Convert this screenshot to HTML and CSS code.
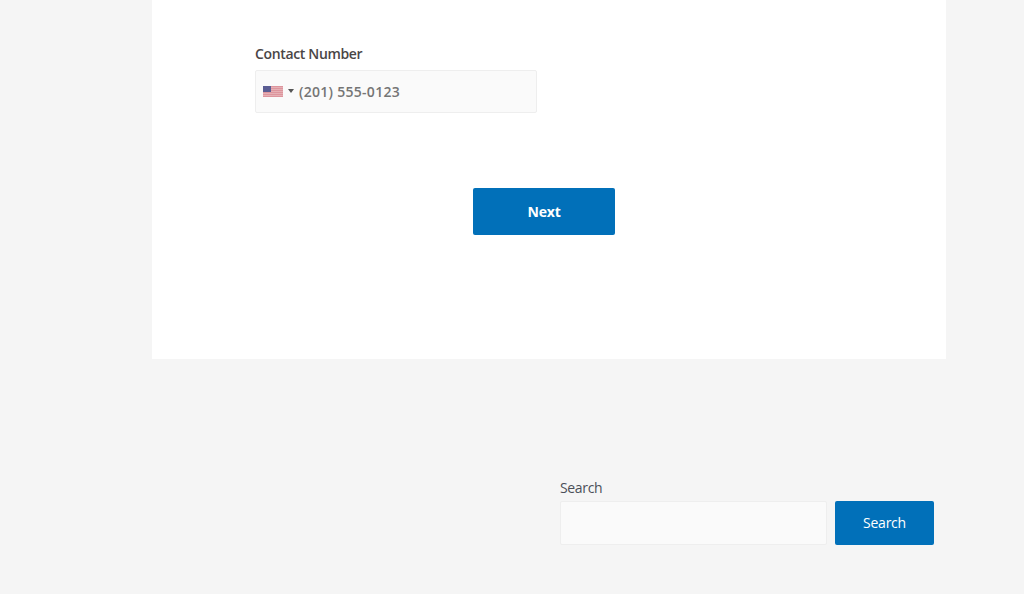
FILE: index.html
```html
<!DOCTYPE html>
<html lang="en">
<head>
    <meta charset="UTF-8">
    <meta name="viewport" content="width=device-width, initial-scale=1.0">
    <title>Contact Number</title>
    <link rel="stylesheet" href="styles.css">
</head>
<body>
    <div class="page">
        <main class="card">
            <form class="form">
                <label class="field-label" for="phone">Contact Number</label>
                <div class="phone-input">
                    <svg class="flag" width="20" height="11" viewBox="0 0 20 11" aria-hidden="true">
                        <rect width="20" height="11" fill="#dd959d"/>
                        <rect width="20" height="1" y="1" fill="#e6b0b5"/>
                        <rect width="20" height="1" y="3" fill="#e6b0b5"/>
                        <rect width="20" height="1" y="5" fill="#e6b0b5"/>
                        <rect width="20" height="1" y="7" fill="#e6b0b5"/>
                        <rect width="20" height="1" y="9" fill="#e6b0b5"/>
                        <rect width="8" height="6" fill="#5a5d93"/>
                    </svg>
                    <span class="arrow"></span>
                    <span id="phone" class="phone-placeholder">(201) 555-0123</span>
                </div>
                <div class="form-actions">
                    <button type="button" class="next-btn">Next</button>
                </div>
            </form>
        </main>
        <footer class="footer">
            <div class="search">
                <label class="search-label" for="search">Search</label>
                <div class="search-row">
                    <input id="search" class="search-input" type="text">
                    <button type="button" class="search-btn">Search</button>
                </div>
            </div>
        </footer>
    </div>
</body>
</html>
```
FILE: styles.css
```css
* {
    box-sizing: border-box;
}
html, body {
    height: 100%;
}
body {
    margin: 0;
    background-color: #f5f5f5;
    font-family: "Open Sans", "Noto Sans", Arial, sans-serif;
    overflow: hidden;
}
.page {
    width: 100%;
}
.card {
    width: 794px;
    height: 359px;
    margin-left: 152px;
    background-color: #fff;
    padding: 44px 113px 0 103px;
}
.field-label {
    display: block;
    font-size: 14px;
    line-height: 20px;
    font-weight: 600;
    letter-spacing: -0.35px;
    color: #4a4646;
}
.phone-input {
    display: flex;
    align-items: center;
    width: 282px;
    height: 43px;
    margin-top: 6px;
    padding-left: 7px;
    background-color: #fafafa;
    border: 1px solid #eeeeee;
    border-radius: 2px;
}
.flag {
    display: block;
    margin-top: -1px;
}
.arrow {
    width: 0;
    height: 0;
    margin-left: 5px;
    margin-top: -1px;
    border-left: 3px solid transparent;
    border-right: 3px solid transparent;
    border-top: 4px solid #555;
}
.phone-placeholder {
    margin-left: 5px;
    font-size: 14px;
    font-weight: 600;
    color: #757575;
    letter-spacing: 0.28px;
}
.form-actions {
    display: flex;
    justify-content: center;
    margin-top: 75px;
}
.next-btn {
    width: 142px;
    height: 47px;
    background-color: #0170b9;
    border: 0;
    border-radius: 2px;
    color: #fff;
    font-family: inherit;
    font-size: 14px;
    font-weight: 700;
    letter-spacing: -0.2px;
}
.footer {
    padding: 119px 0 0 560px;
}
.search {
    width: 374px;
}
.search-label {
    display: block;
    font-size: 14px;
    line-height: 19px;
    letter-spacing: -0.35px;
    color: #4b4f58;
}
.search-row {
    display: flex;
    gap: 8px;
    margin-top: 4px;
}
.search-input {
    width: 267px;
    height: 44px;
    background-color: #fafafa;
    border: 1px solid #eeeeee;
    border-radius: 2px;
}
.search-btn {
    width: 99px;
    height: 44px;
    background-color: #0170b9;
    border: 0;
    border-radius: 2px;
    color: #fff;
    font-family: inherit;
    font-size: 14px;
    letter-spacing: -0.25px;
    padding-bottom: 2px;
}
```
